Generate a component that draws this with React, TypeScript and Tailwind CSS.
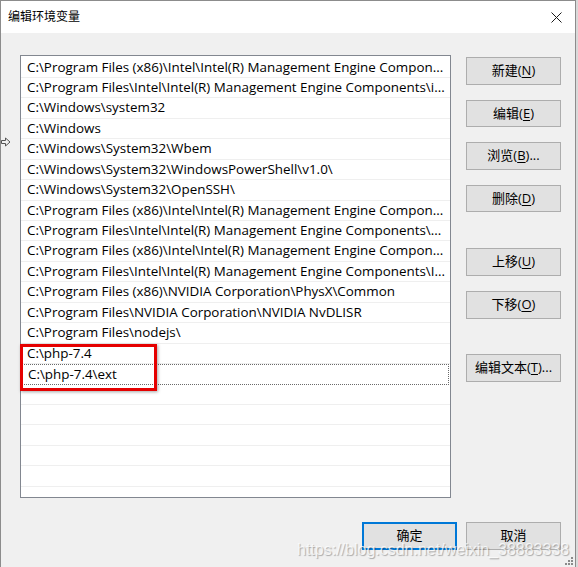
import React from "react";

const paths = [
  "C:\\Program Files (x86)\\Intel\\Intel(R) Management Engine Compon...",
  "C:\\Program Files\\Intel\\Intel(R) Management Engine Components\\i...",
  "C:\\Windows\\system32",
  "C:\\Windows",
  "C:\\Windows\\System32\\Wbem",
  "C:\\Windows\\System32\\WindowsPowerShell\\v1.0\\",
  "C:\\Windows\\System32\\OpenSSH\\",
  "C:\\Program Files (x86)\\Intel\\Intel(R) Management Engine Compon...",
  "C:\\Program Files\\Intel\\Intel(R) Management Engine Components\\...",
  "C:\\Program Files (x86)\\Intel\\Intel(R) Management Engine Compon...",
  "C:\\Program Files\\Intel\\Intel(R) Management Engine Components\\I...",
  "C:\\Program Files (x86)\\NVIDIA Corporation\\PhysX\\Common",
  "C:\\Program Files\\NVIDIA Corporation\\NVIDIA NvDLISR",
  "C:\\Program Files\\nodejs\\",
  "C:\\php-7.4",
  "C:\\php-7.4\\ext",
  "",
  "",
  "",
  "",
  "",
];

const Btn = ({
  label,
  hotkey,
  suffix = "",
  className = "",
  primary = false,
}: {
  label: string;
  hotkey?: string;
  suffix?: string;
  className?: string;
  primary?: boolean;
}) => (
  <div
    className={`flex h-[27.5px] w-[95px] items-center justify-center bg-[#e1e1e1] text-[13px] text-black ${
      primary ? "border-2 border-[#0078d7]" : "border border-[#adadad]"
    } ${className}`}
  >
    {label}
    {hotkey && (
      <span>
        (<span className="underline underline-offset-2">{hotkey}</span>){suffix}
      </span>
    )}
  </div>
);

export default function App() {
  return (
    <div className="relative h-[567px] w-[578px] overflow-hidden bg-[#d9d9d9] font-['Open_Sans','Noto_Sans_CJK_SC',sans-serif]">
      <div className="h-[600px] w-[576px] border-l border-r border-t border-[#8c8c8c] bg-[#f0f0f0]">
        {/* title bar */}
        <div className="flex h-[32px] items-center justify-between bg-white pl-[7px] pr-[12px]">
          <span className="text-[12px] text-black">编辑环境变量</span>
          <svg width="11" height="11" viewBox="0 0 11 11" className="mr-[1px]">
            <path d="M0.5 0.5 L10.5 10.5 M10.5 0.5 L0.5 10.5" stroke="#1a1a1a" strokeWidth="1" />
          </svg>
        </div>

        <div className="pl-[19px] pr-[14px]">
          <div className="flex">
            {/* path list */}
            <div className="mt-[22px] h-[443px] w-[431px] overflow-hidden border border-[#828790] bg-white pt-[1.5px]">
              {paths.map((p, i) => (
                <div
                  key={i}
                  className={`flex h-[20.45px] items-center overflow-hidden whitespace-nowrap pl-[6px] pr-[5px] text-[13.4px] leading-none text-black ${
                    i === 15
                      ? "mr-[1px] border border-dotted border-[#6a6a6a]"
                      : "border-b border-[#efefef]"
                  }`}
                >
                  {p}
                </div>
              ))}
            </div>

            {/* side buttons */}
            <div className="ml-[15px] mt-[24px] flex flex-col">
              <Btn label="新建" hotkey="N" />
              <Btn label="编辑" hotkey="E" className="mt-[15px]" />
              <Btn label="浏览" hotkey="B" suffix="..." className="mt-[15px]" />
              <Btn label="删除" hotkey="D" className="mt-[15px]" />
              <Btn label="上移" hotkey="U" className="mt-[36px]" />
              <Btn label="下移" hotkey="O" className="mt-[15.5px]" />
              <Btn label="编辑文本" hotkey="T" suffix="..." className="mt-[35.5px]" />
            </div>
          </div>

          {/* bottom buttons */}
          <div className="mt-[23.5px] flex justify-end gap-[9px]">
            <Btn label="确定" primary className="h-[28px] w-[94px]" />
            <Btn label="取消" className="h-[28px]" />
          </div>
        </div>
      </div>

      {/* arrow peeking from background */}
      <svg className="absolute left-[1px] top-[137px]" width="10" height="10" viewBox="0 0 10 10">
        <path d="M0.5 3.5 H4.5 V1 L9 5 L4.5 9 V6.5 H0.5 Z" fill="none" stroke="#555" strokeWidth="1" />
      </svg>

      {/* red annotation box */}
      <div className="absolute left-[20px] top-[344px] h-[47px] w-[137px] border-[3px] border-[#e50000] shadow-[1px_1px_3px_rgba(0,0,0,0.35)]" />

      {/* watermark */}
      <div className="pointer-events-none absolute left-[297px] top-[538px] font-['Liberation_Sans',sans-serif] text-[16px] text-white/75 [text-shadow:1px_1px_1px_rgba(0,0,0,0.3)]">
        https://blog.csdn.net/weixin_38883338
      </div>

      {/* resize grip */}
      <svg className="absolute left-[564px] top-[556px]" width="10" height="10" viewBox="0 0 10 10">
        <rect x="7" y="1" width="2" height="2" fill="#8a8a8a" />
        <rect x="4" y="4" width="2" height="2" fill="#8a8a8a" />
        <rect x="7" y="4" width="2" height="2" fill="#8a8a8a" />
        <rect x="1" y="7" width="2" height="2" fill="#8a8a8a" />
        <rect x="4" y="7" width="2" height="2" fill="#8a8a8a" />
        <rect x="7" y="7" width="2" height="2" fill="#8a8a8a" />
      </svg>
    </div>
  );
}
